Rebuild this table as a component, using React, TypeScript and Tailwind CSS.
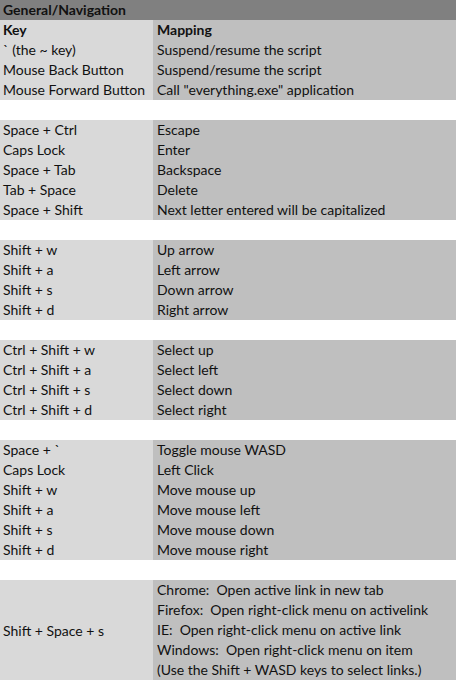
const sections = [
  {
    rows: [
      ['` (the ~ key)', 'Suspend/resume the script'],
      ['Mouse Back Button', 'Suspend/resume the script'],
      ['Mouse Forward Button', 'Call "everything.exe" application'],
    ],
  },
  {
    rows: [
      ['Space + Ctrl', 'Escape'],
      ['Caps Lock', 'Enter'],
      ['Space + Tab', 'Backspace'],
      ['Tab + Space', 'Delete'],
      ['Space + Shift', 'Next letter entered will be capitalized'],
    ],
  },
  {
    rows: [
      ['Shift + w', 'Up arrow'],
      ['Shift + a', 'Left arrow'],
      ['Shift + s', 'Down arrow'],
      ['Shift + d', 'Right arrow'],
    ],
  },
  {
    rows: [
      ['Ctrl + Shift + w', 'Select up'],
      ['Ctrl + Shift + a', 'Select left'],
      ['Ctrl + Shift + s', 'Select down'],
      ['Ctrl + Shift + d', 'Select right'],
    ],
  },
  {
    rows: [
      ['Space + `', 'Toggle mouse WASD'],
      ['Caps Lock', 'Left Click'],
      ['Shift + w', 'Move mouse up'],
      ['Shift + a', 'Move mouse left'],
      ['Shift + s', 'Move mouse down'],
      ['Shift + d', 'Move mouse right'],
    ],
  },
]

const browserLines = [
  'Chrome:  Open active link in new tab',
  'Firefox:  Open right-click menu on activelink',
  'IE:  Open right-click menu on active link',
  'Windows:  Open right-click menu on item',
  '(Use the Shift + WASD keys to select links.)',
]

function Row({ k, v, bold }: { k: string; v: string; bold?: boolean }) {
  return (
    <div className={`grid grid-cols-[153px_1fr] h-5 ${bold ? 'font-bold' : ''}`}>
      <div className="bg-[#d9d9d9] pl-[3px] leading-5 whitespace-pre">{k}</div>
      <div className="bg-[#bfbfbf] pl-[4px] leading-5 whitespace-pre">{v}</div>
    </div>
  )
}

export default function App() {
  return (
    <div className="w-[456px] h-[680px] bg-white text-[14px] text-[#111] overflow-hidden" style={{ fontFamily: 'Lato, "Open Sans", sans-serif' }}>
      <div className="h-5 bg-[#808080] pl-[3px] leading-5 font-bold">General/Navigation</div>
      <Row k="Key" v="Mapping" bold />
      {sections.map((section, i) => (
        <div key={i}>
          {i > 0 && <div className="h-5" />}
          {section.rows.map((r, j) => (
            <Row key={j} k={r[0]} v={r[1]} />
          ))}
        </div>
      ))}
      <div className="h-5" />
      <div className="grid grid-cols-[153px_1fr]">
        <div className="bg-[#d9d9d9] pl-[3px] flex items-center">Shift + Space + s</div>
        <div className="bg-[#bfbfbf] pl-[4px]">
          {browserLines.map((line, i) => (
            <div key={i} className="h-5 leading-5 whitespace-pre">{line}</div>
          ))}
        </div>
      </div>
    </div>
  )
}
